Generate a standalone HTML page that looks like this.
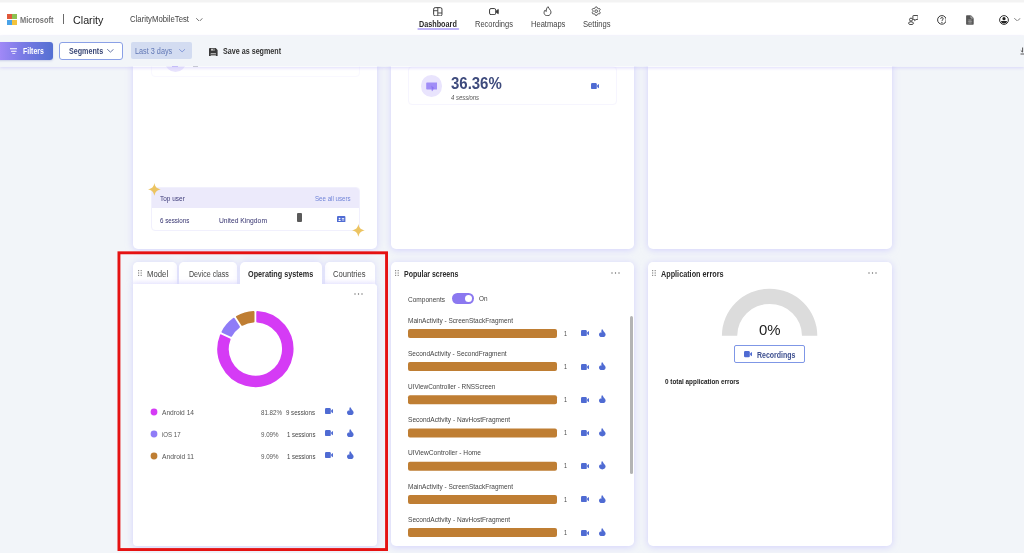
<!DOCTYPE html>
<html lang="en"><head><meta charset="utf-8"><title>Clarity - Dashboard</title>
<style>
html,body{margin:0;padding:0}
body{width:1024px;height:553px;overflow:hidden;position:relative;background:#f2f5f9;font-family:"Liberation Sans", sans-serif}
.t{position:absolute;white-space:pre;transform-origin:0 50%;}
#root{filter:blur(0.55px);position:absolute;left:0;top:0;width:1024px;height:553px;overflow:hidden}
</style></head><body><div id="root">
<div style="position:absolute;left:133.30px;top:40.00px;width:243.90px;height:208.70px;background:#fff;border-radius:5px;box-shadow:0 1px 7px 0 rgba(190,185,255,0.6);"></div>
<div style="position:absolute;left:391.00px;top:40.00px;width:243.30px;height:208.70px;background:#fff;border-radius:5px;box-shadow:0 1px 7px 0 rgba(190,185,255,0.6);"></div>
<div style="position:absolute;left:648.00px;top:40.00px;width:244.00px;height:208.70px;background:#fff;border-radius:5px;box-shadow:0 1px 7px 0 rgba(190,185,255,0.6);"></div>
<div style="position:absolute;left:133.30px;top:262.00px;width:43.70px;height:24.00px;background:linear-gradient(180deg,#fff 0,#fff 72%,#f4f3fe 100%);border-radius:5px 5px 0 0;box-shadow:0 0 6px 0 rgba(190,185,255,0.48);"></div>
<div style="position:absolute;left:179.20px;top:262.00px;width:58.20px;height:24.00px;background:linear-gradient(180deg,#fff 0,#fff 72%,#f4f3fe 100%);border-radius:5px 5px 0 0;box-shadow:0 0 6px 0 rgba(190,185,255,0.48);"></div>
<div style="position:absolute;left:324.60px;top:262.00px;width:50.40px;height:24.00px;background:linear-gradient(180deg,#fff 0,#fff 72%,#f4f3fe 100%);border-radius:5px 5px 0 0;box-shadow:0 0 6px 0 rgba(190,185,255,0.48);"></div>
<div style="position:absolute;left:133.30px;top:283.80px;width:243.90px;height:262.40px;background:#fff;border-radius:5px;box-shadow:0 1px 7px 0 rgba(190,185,255,0.6);border-radius:0 4px 4px 4px;"></div>
<div style="position:absolute;left:239.60px;top:262.00px;width:82.40px;height:24.00px;background:#fff;border-radius:5px 5px 0 0;box-shadow:0 -1px 6px 0 rgba(190,185,255,0.48);"></div>
<div style="position:absolute;left:133.30px;top:283.80px;width:243.90px;height:20.00px;background:#fff;border-radius:0 4px 0 0;"></div>
<div style="position:absolute;left:391.00px;top:262.00px;width:243.30px;height:284.00px;background:#fff;border-radius:5px;box-shadow:0 1px 7px 0 rgba(190,185,255,0.6);"></div>
<div style="position:absolute;left:648.00px;top:262.00px;width:244.00px;height:284.00px;background:#fff;border-radius:5px;box-shadow:0 1px 7px 0 rgba(190,185,255,0.6);"></div>
<div style="position:absolute;left:151.00px;top:40.00px;width:208.60px;height:37.00px;border:1px solid #f9f8ff;border-radius:4px;box-sizing:border-box;"></div>
<div style="position:absolute;left:164.8px;top:51px;width:21.2px;height:21.2px;border-radius:50%;background:#e9e4fd"></div><div style="position:absolute;left:172.4px;top:65.6px;width:6px;height:1.4px;background:#a08df7"></div>
<div style="position:absolute;left:193.00px;top:66.00px;width:4.60px;height:1.00px;background:#a4a4b4;"></div>
<div style="position:absolute;left:408.40px;top:66.40px;width:208.40px;height:38.60px;border:1px solid #f6f5fe;border-radius:4px;box-sizing:border-box;"></div>
<div style="position:absolute;left:420.6px;top:75.4px;width:21.2px;height:21.2px;border-radius:50%;background:#e9e4fd"></div>
<svg style="position:absolute;left:425.6px;top:81.6px" width="11.4" height="10" viewBox="0 0 11.4 10"><path d="M1 .4h9.4a.8.8 0 0 1 .8.8v5.6a.8.8 0 0 1-.8.8H7.6L6 9.6 5.4 7.6H1a.8.8 0 0 1-.8-.8V1.200A.8.800 0 0 1 1 .4z" fill="#a08df7"/><path d="M5.300 3.400l3.400 3-1.700.1-.9 1.500z" fill="#8a74f0"/></svg>
<svg style="position:absolute;left:591.00px;top:82.80px" width="8.40" height="6.20" viewBox="0 0 84 62"><rect x="0" y="0" width="58" height="62" rx="12" fill="#4f6bd3"/><path d="M62 22L80 9a3 3 0 0 1 4 3v38a3 3 0 0 1-4 3L62 40z" fill="#4f6bd3"/></svg>
<div style="position:absolute;left:151.20px;top:187.10px;width:208.40px;height:44.00px;border:1px solid #f1f0fd;border-radius:4px;box-sizing:border-box;background:#fff;overflow:hidden;"><div style="height:20.4px;background:#eceafb"></div></div>
<svg style="position:absolute;left:148.10px;top:183.20px" width="12.80" height="12.80" viewBox="-10 -10 20 20"><path d="M0-10C1.400-3.500 3.500-1.400 10 0 3.500 1.400 1.400 3.500 0 10-1.400 3.500-3.500 1.400-10 0-3.500-1.400-1.400-3.500 0-10z" fill="#ecc462"/></svg>
<svg style="position:absolute;left:352.10px;top:223.90px" width="12.80" height="12.80" viewBox="-10 -10 20 20"><path d="M0-10C1.400-3.500 3.500-1.400 10 0 3.500 1.400 1.400 3.500 0 10-1.400 3.500-3.500 1.400-10 0-3.500-1.400-1.400-3.500 0-10z" fill="#ecc462"/></svg>
<div style="position:absolute;left:297.00px;top:213.00px;width:5.20px;height:9.40px;background:#5a5a5a;border-radius:1px;"></div>
<svg style="position:absolute;left:337.4px;top:216px" width="8.4" height="6.4" viewBox="0 0 84 64"><rect width="84" height="64" rx="10" fill="#4f6bd3"/><circle cx="26" cy="26" r="9" fill="#fff"/><rect x="14" y="40" width="24" height="10" rx="4" fill="#fff"/><rect x="48" y="20" width="24" height="8" fill="#fff"/><rect x="48" y="36" width="24" height="8" fill="#fff"/></svg>
<svg style="position:absolute;left:138.20px;top:270.30px" width="4" height="6.2" viewBox="0 0 4 6.2"><rect x="0" y="0" width="1.200" height="1.200" fill="#8a8a8a"/><rect x="2.6" y="0" width="1.200" height="1.200" fill="#8a8a8a"/><rect x="0" y="2.4" width="1.200" height="1.200" fill="#8a8a8a"/><rect x="2.6" y="2.4" width="1.200" height="1.200" fill="#8a8a8a"/><rect x="0" y="4.8" width="1.200" height="1.200" fill="#8a8a8a"/><rect x="2.6" y="4.8" width="1.200" height="1.200" fill="#8a8a8a"/></svg>
<svg style="position:absolute;left:395.20px;top:270.40px" width="4" height="6.2" viewBox="0 0 4 6.2"><rect x="0" y="0" width="1.200" height="1.200" fill="#8a8a8a"/><rect x="2.6" y="0" width="1.200" height="1.200" fill="#8a8a8a"/><rect x="0" y="2.4" width="1.200" height="1.200" fill="#8a8a8a"/><rect x="2.6" y="2.4" width="1.200" height="1.200" fill="#8a8a8a"/><rect x="0" y="4.8" width="1.200" height="1.200" fill="#8a8a8a"/><rect x="2.6" y="4.8" width="1.200" height="1.200" fill="#8a8a8a"/></svg>
<svg style="position:absolute;left:652.40px;top:270.40px" width="4" height="6.2" viewBox="0 0 4 6.2"><rect x="0" y="0" width="1.200" height="1.200" fill="#8a8a8a"/><rect x="2.6" y="0" width="1.200" height="1.200" fill="#8a8a8a"/><rect x="0" y="2.4" width="1.200" height="1.200" fill="#8a8a8a"/><rect x="2.6" y="2.4" width="1.200" height="1.200" fill="#8a8a8a"/><rect x="0" y="4.8" width="1.200" height="1.200" fill="#8a8a8a"/><rect x="2.6" y="4.8" width="1.200" height="1.200" fill="#8a8a8a"/></svg>
<svg style="position:absolute;left:353.60px;top:293.40px" width="9" height="2" viewBox="0 0 9 2"><circle cx="1" cy="1" r=".7" fill="#666"/><circle cx="4.500" cy="1" r=".7" fill="#666"/><circle cx="8" cy="1" r=".7" fill="#666"/></svg>
<svg style="position:absolute;left:610.80px;top:271.80px" width="9" height="2" viewBox="0 0 9 2"><circle cx="1" cy="1" r=".7" fill="#666"/><circle cx="4.500" cy="1" r=".7" fill="#666"/><circle cx="8" cy="1" r=".7" fill="#666"/></svg>
<svg style="position:absolute;left:868.00px;top:271.80px" width="9" height="2" viewBox="0 0 9 2"><circle cx="1" cy="1" r=".7" fill="#666"/><circle cx="4.500" cy="1" r=".7" fill="#666"/><circle cx="8" cy="1" r=".7" fill="#666"/></svg>
<svg style="position:absolute;left:205px;top:300px" width="100" height="100" viewBox="205 300 100 100"><path d="M257.30 311.95A37.10 37.10 0 1 1 220.91 335.33L229.57 339.29A27.60 27.60 0 1 0 257.30 321.47Z" fill="#d53bf5" stroke="#d53bf5" stroke-width="2" stroke-linejoin="round"/><path d="M222.49 331.88A37.10 37.10 0 0 1 233.77 318.86L238.92 326.86A27.60 27.60 0 0 0 231.14 335.83Z" fill="#8f7cf7" stroke="#8f7cf7" stroke-width="2" stroke-linejoin="round"/><path d="M236.96 316.80A37.10 37.10 0 0 1 253.50 311.95L253.50 321.47A27.60 27.60 0 0 0 242.11 324.81Z" fill="#bf7e33" stroke="#bf7e33" stroke-width="2" stroke-linejoin="round"/></svg>
<svg style="position:absolute;left:149px;top:407.00px" width="10" height="10" viewBox="-5 -5 10 10"><circle r="3.400" fill="#d53bf5"/></svg>
<svg style="position:absolute;left:325.00px;top:408.20px" width="8.40" height="6.20" viewBox="0 0 84 62"><rect x="0" y="0" width="58" height="62" rx="12" fill="#4f6bd3"/><path d="M62 22L80 9a3 3 0 0 1 4 3v38a3 3 0 0 1-4 3L62 40z" fill="#4f6bd3"/></svg>
<svg style="position:absolute;left:347.40px;top:406.70px" width="6.60" height="8.40" viewBox="0 0 66 84"><path d="M30 0C42 8 44 20 50 28 60 38 66 46 66 56 66 72 52 84 33 84 14 84 0 72 0 56 0 46 6 38 14 32 16 38 20 40 24 38 22 24 24 10 30 0z" fill="#4f6bd3"/></svg>
<svg style="position:absolute;left:149px;top:429.00px" width="10" height="10" viewBox="-5 -5 10 10"><circle r="3.400" fill="#8f7cf7"/></svg>
<svg style="position:absolute;left:325.00px;top:430.20px" width="8.40" height="6.20" viewBox="0 0 84 62"><rect x="0" y="0" width="58" height="62" rx="12" fill="#4f6bd3"/><path d="M62 22L80 9a3 3 0 0 1 4 3v38a3 3 0 0 1-4 3L62 40z" fill="#4f6bd3"/></svg>
<svg style="position:absolute;left:347.40px;top:428.70px" width="6.60" height="8.40" viewBox="0 0 66 84"><path d="M30 0C42 8 44 20 50 28 60 38 66 46 66 56 66 72 52 84 33 84 14 84 0 72 0 56 0 46 6 38 14 32 16 38 20 40 24 38 22 24 24 10 30 0z" fill="#4f6bd3"/></svg>
<svg style="position:absolute;left:149px;top:451.00px" width="10" height="10" viewBox="-5 -5 10 10"><circle r="3.400" fill="#bf7e33"/></svg>
<svg style="position:absolute;left:325.00px;top:452.20px" width="8.40" height="6.20" viewBox="0 0 84 62"><rect x="0" y="0" width="58" height="62" rx="12" fill="#4f6bd3"/><path d="M62 22L80 9a3 3 0 0 1 4 3v38a3 3 0 0 1-4 3L62 40z" fill="#4f6bd3"/></svg>
<svg style="position:absolute;left:347.40px;top:450.70px" width="6.60" height="8.40" viewBox="0 0 66 84"><path d="M30 0C42 8 44 20 50 28 60 38 66 46 66 56 66 72 52 84 33 84 14 84 0 72 0 56 0 46 6 38 14 32 16 38 20 40 24 38 22 24 24 10 30 0z" fill="#4f6bd3"/></svg>
<div style="position:absolute;left:451.90px;top:293.30px;width:22.30px;height:10.80px;background:#8b78f0;border-radius:5.4px;"></div>
<div style="position:absolute;left:465.2px;top:295.1px;width:7.2px;height:7.2px;border-radius:50%;background:#fff"></div>
<svg style="position:absolute;left:581.00px;top:330.30px" width="8.40" height="6.20" viewBox="0 0 84 62"><rect x="0" y="0" width="58" height="62" rx="12" fill="#4f6bd3"/><path d="M62 22L80 9a3 3 0 0 1 4 3v38a3 3 0 0 1-4 3L62 40z" fill="#4f6bd3"/></svg>
<svg style="position:absolute;left:599.20px;top:328.60px" width="6.60" height="8.40" viewBox="0 0 66 84"><path d="M30 0C42 8 44 20 50 28 60 38 66 46 66 56 66 72 52 84 33 84 14 84 0 72 0 56 0 46 6 38 14 32 16 38 20 40 24 38 22 24 24 10 30 0z" fill="#4f6bd3"/></svg>
<svg style="position:absolute;left:581.00px;top:363.50px" width="8.40" height="6.20" viewBox="0 0 84 62"><rect x="0" y="0" width="58" height="62" rx="12" fill="#4f6bd3"/><path d="M62 22L80 9a3 3 0 0 1 4 3v38a3 3 0 0 1-4 3L62 40z" fill="#4f6bd3"/></svg>
<svg style="position:absolute;left:599.20px;top:361.80px" width="6.60" height="8.40" viewBox="0 0 66 84"><path d="M30 0C42 8 44 20 50 28 60 38 66 46 66 56 66 72 52 84 33 84 14 84 0 72 0 56 0 46 6 38 14 32 16 38 20 40 24 38 22 24 24 10 30 0z" fill="#4f6bd3"/></svg>
<svg style="position:absolute;left:581.00px;top:396.70px" width="8.40" height="6.20" viewBox="0 0 84 62"><rect x="0" y="0" width="58" height="62" rx="12" fill="#4f6bd3"/><path d="M62 22L80 9a3 3 0 0 1 4 3v38a3 3 0 0 1-4 3L62 40z" fill="#4f6bd3"/></svg>
<svg style="position:absolute;left:599.20px;top:395.00px" width="6.60" height="8.40" viewBox="0 0 66 84"><path d="M30 0C42 8 44 20 50 28 60 38 66 46 66 56 66 72 52 84 33 84 14 84 0 72 0 56 0 46 6 38 14 32 16 38 20 40 24 38 22 24 24 10 30 0z" fill="#4f6bd3"/></svg>
<svg style="position:absolute;left:581.00px;top:429.90px" width="8.40" height="6.20" viewBox="0 0 84 62"><rect x="0" y="0" width="58" height="62" rx="12" fill="#4f6bd3"/><path d="M62 22L80 9a3 3 0 0 1 4 3v38a3 3 0 0 1-4 3L62 40z" fill="#4f6bd3"/></svg>
<svg style="position:absolute;left:599.20px;top:428.20px" width="6.60" height="8.40" viewBox="0 0 66 84"><path d="M30 0C42 8 44 20 50 28 60 38 66 46 66 56 66 72 52 84 33 84 14 84 0 72 0 56 0 46 6 38 14 32 16 38 20 40 24 38 22 24 24 10 30 0z" fill="#4f6bd3"/></svg>
<svg style="position:absolute;left:581.00px;top:463.10px" width="8.40" height="6.20" viewBox="0 0 84 62"><rect x="0" y="0" width="58" height="62" rx="12" fill="#4f6bd3"/><path d="M62 22L80 9a3 3 0 0 1 4 3v38a3 3 0 0 1-4 3L62 40z" fill="#4f6bd3"/></svg>
<svg style="position:absolute;left:599.20px;top:461.40px" width="6.60" height="8.40" viewBox="0 0 66 84"><path d="M30 0C42 8 44 20 50 28 60 38 66 46 66 56 66 72 52 84 33 84 14 84 0 72 0 56 0 46 6 38 14 32 16 38 20 40 24 38 22 24 24 10 30 0z" fill="#4f6bd3"/></svg>
<svg style="position:absolute;left:581.00px;top:496.30px" width="8.40" height="6.20" viewBox="0 0 84 62"><rect x="0" y="0" width="58" height="62" rx="12" fill="#4f6bd3"/><path d="M62 22L80 9a3 3 0 0 1 4 3v38a3 3 0 0 1-4 3L62 40z" fill="#4f6bd3"/></svg>
<svg style="position:absolute;left:599.20px;top:494.60px" width="6.60" height="8.40" viewBox="0 0 66 84"><path d="M30 0C42 8 44 20 50 28 60 38 66 46 66 56 66 72 52 84 33 84 14 84 0 72 0 56 0 46 6 38 14 32 16 38 20 40 24 38 22 24 24 10 30 0z" fill="#4f6bd3"/></svg>
<svg style="position:absolute;left:581.00px;top:529.50px" width="8.40" height="6.20" viewBox="0 0 84 62"><rect x="0" y="0" width="58" height="62" rx="12" fill="#4f6bd3"/><path d="M62 22L80 9a3 3 0 0 1 4 3v38a3 3 0 0 1-4 3L62 40z" fill="#4f6bd3"/></svg>
<svg style="position:absolute;left:599.20px;top:527.80px" width="6.60" height="8.40" viewBox="0 0 66 84"><path d="M30 0C42 8 44 20 50 28 60 38 66 46 66 56 66 72 52 84 33 84 14 84 0 72 0 56 0 46 6 38 14 32 16 38 20 40 24 38 22 24 24 10 30 0z" fill="#4f6bd3"/></svg>
<svg style="position:absolute;left:0;top:0" width="1024" height="553" viewBox="0 0 1024 553"><rect x="408" y="328.90" width="149" height="9" rx="2" fill="#bf7e33"/><rect x="408" y="362.10" width="149" height="9" rx="2" fill="#bf7e33"/><rect x="408" y="395.30" width="149" height="9" rx="2" fill="#bf7e33"/><rect x="408" y="428.50" width="149" height="9" rx="2" fill="#bf7e33"/><rect x="408" y="461.70" width="149" height="9" rx="2" fill="#bf7e33"/><rect x="408" y="494.90" width="149" height="9" rx="2" fill="#bf7e33"/><rect x="408" y="528.10" width="149" height="9" rx="2" fill="#bf7e33"/></svg>
<div style="position:absolute;left:630.00px;top:315.80px;width:3.20px;height:158.00px;background:#b4b4b4;border-radius:1.600px;"></div>
<svg style="position:absolute;left:715px;top:285px" width="110" height="55" viewBox="715 285 110 55"><path d="M721.9 335.7A47.7 47.1 0 0 1 817.3 335.7L802 335.7A32.4 31.8 0 0 0 737.2 335.7Z" fill="#dcdcdc"/></svg>
<div style="position:absolute;left:734.30px;top:345.40px;width:70.60px;height:17.80px;background:#fff;border:1px solid #7f97e6;border-radius:2px;box-sizing:border-box;"></div>
<svg style="position:absolute;left:744.00px;top:351.40px" width="8.40" height="6.20" viewBox="0 0 84 62"><rect x="0" y="0" width="58" height="62" rx="12" fill="#4f6bd3"/><path d="M62 22L80 9a3 3 0 0 1 4 3v38a3 3 0 0 1-4 3L62 40z" fill="#4f6bd3"/></svg>
<span class="t" style="left:451.00px;top:72.15px;font-size:16.50px;line-height:23.10px;font-weight:700;color:#3d4a7c;transform:scaleX(0.9059);">36.36%</span>
<span class="t" style="left:451.00px;top:92.68px;font-size:6.60px;line-height:9.24px;font-weight:400;color:#555;transform:scaleX(0.8987);font-style:italic;">4 sessions</span>
<span class="t" style="left:160.30px;top:193.78px;font-size:7.60px;line-height:10.64px;font-weight:400;color:#3c3a78;transform:scaleX(0.8515);">Top user</span>
<span class="t" style="left:314.60px;top:193.78px;font-size:7.60px;line-height:10.64px;font-weight:400;color:#6f83d8;transform:scaleX(0.8108);">See all users</span>
<span class="t" style="left:160.00px;top:215.62px;font-size:7.40px;line-height:10.36px;font-weight:400;color:#34326f;transform:scaleX(0.8419);">6 sessions</span>
<span class="t" style="left:219.00px;top:215.62px;font-size:7.40px;line-height:10.36px;font-weight:400;color:#34326f;transform:scaleX(0.9127);">United Kingdom</span>
<span class="t" style="left:146.90px;top:268.82px;font-size:8.40px;line-height:11.76px;font-weight:400;color:#444;transform:scaleX(0.9249);">Model</span>
<span class="t" style="left:188.60px;top:268.82px;font-size:8.40px;line-height:11.76px;font-weight:400;color:#444;transform:scaleX(0.8465);">Device class</span>
<span class="t" style="left:248.40px;top:268.82px;font-size:8.40px;line-height:11.76px;font-weight:700;color:#2b2b2b;transform:scaleX(0.8646);">Operating systems</span>
<span class="t" style="left:333.40px;top:268.82px;font-size:8.40px;line-height:11.76px;font-weight:400;color:#444;transform:scaleX(0.9095);">Countries</span>
<span class="t" style="left:162.00px;top:407.62px;font-size:7.40px;line-height:10.36px;font-weight:400;color:#555;transform:scaleX(0.8951);">Android 14</span>
<span class="t" style="left:260.60px;top:407.62px;font-size:7.40px;line-height:10.36px;font-weight:400;color:#555;transform:scaleX(0.8374);">81.82%</span>
<span class="t" style="left:286.40px;top:407.62px;font-size:7.40px;line-height:10.36px;font-weight:400;color:#444;transform:scaleX(0.8304);">9 sessions</span>
<span class="t" style="left:162.00px;top:429.62px;font-size:7.40px;line-height:10.36px;font-weight:400;color:#555;transform:scaleX(0.8227);">iOS 17</span>
<span class="t" style="left:260.60px;top:429.62px;font-size:7.40px;line-height:10.36px;font-weight:400;color:#555;transform:scaleX(0.8393);">9.09%</span>
<span class="t" style="left:287.00px;top:429.62px;font-size:7.40px;line-height:10.36px;font-weight:400;color:#444;transform:scaleX(0.8132);">1 sessions</span>
<span class="t" style="left:162.00px;top:451.62px;font-size:7.40px;line-height:10.36px;font-weight:400;color:#555;transform:scaleX(0.9090);">Android 11</span>
<span class="t" style="left:260.60px;top:451.62px;font-size:7.40px;line-height:10.36px;font-weight:400;color:#555;transform:scaleX(0.8393);">9.09%</span>
<span class="t" style="left:287.00px;top:451.62px;font-size:7.40px;line-height:10.36px;font-weight:400;color:#444;transform:scaleX(0.8132);">1 sessions</span>
<span class="t" style="left:403.70px;top:268.79px;font-size:8.30px;line-height:11.62px;font-weight:700;color:#2b2b2b;transform:scaleX(0.8410);">Popular screens</span>
<span class="t" style="left:408.00px;top:294.68px;font-size:7.60px;line-height:10.64px;font-weight:400;color:#444;transform:scaleX(0.8592);">Components</span>
<span class="t" style="left:478.50px;top:293.98px;font-size:7.60px;line-height:10.64px;font-weight:400;color:#444;transform:scaleX(0.8382);">On</span>
<span class="t" style="left:408.00px;top:315.62px;font-size:7.40px;line-height:10.36px;font-weight:400;color:#444;transform:scaleX(0.8784);">MainActivity - ScreenStackFragment</span>
<span class="t" style="left:563.60px;top:328.52px;font-size:7.40px;line-height:10.36px;font-weight:400;color:#444;transform:scaleX(0.7273);">1</span>
<span class="t" style="left:408.00px;top:348.82px;font-size:7.40px;line-height:10.36px;font-weight:400;color:#444;transform:scaleX(0.8825);">SecondActivity - SecondFragment</span>
<span class="t" style="left:563.60px;top:361.72px;font-size:7.40px;line-height:10.36px;font-weight:400;color:#444;transform:scaleX(0.7273);">1</span>
<span class="t" style="left:408.00px;top:382.02px;font-size:7.40px;line-height:10.36px;font-weight:400;color:#444;transform:scaleX(0.8662);">UIViewController - RNSScreen</span>
<span class="t" style="left:563.60px;top:394.92px;font-size:7.40px;line-height:10.36px;font-weight:400;color:#444;transform:scaleX(0.7273);">1</span>
<span class="t" style="left:408.00px;top:415.22px;font-size:7.40px;line-height:10.36px;font-weight:400;color:#444;transform:scaleX(0.8886);">SecondActivity - NavHostFragment</span>
<span class="t" style="left:563.60px;top:428.12px;font-size:7.40px;line-height:10.36px;font-weight:400;color:#444;transform:scaleX(0.7273);">1</span>
<span class="t" style="left:408.00px;top:448.42px;font-size:7.40px;line-height:10.36px;font-weight:400;color:#444;transform:scaleX(0.8945);">UIViewController - Home</span>
<span class="t" style="left:563.60px;top:461.32px;font-size:7.40px;line-height:10.36px;font-weight:400;color:#444;transform:scaleX(0.7273);">1</span>
<span class="t" style="left:408.00px;top:481.62px;font-size:7.40px;line-height:10.36px;font-weight:400;color:#444;transform:scaleX(0.8784);">MainActivity - ScreenStackFragment</span>
<span class="t" style="left:563.60px;top:494.52px;font-size:7.40px;line-height:10.36px;font-weight:400;color:#444;transform:scaleX(0.7273);">1</span>
<span class="t" style="left:408.00px;top:514.82px;font-size:7.40px;line-height:10.36px;font-weight:400;color:#444;transform:scaleX(0.8886);">SecondActivity - NavHostFragment</span>
<span class="t" style="left:563.60px;top:527.72px;font-size:7.40px;line-height:10.36px;font-weight:400;color:#444;transform:scaleX(0.7273);">1</span>
<span class="t" style="left:661.00px;top:268.79px;font-size:8.30px;line-height:11.62px;font-weight:700;color:#2b2b2b;transform:scaleX(0.8745);">Application errors</span>
<span class="t" style="left:758.60px;top:319.32px;font-size:15.40px;line-height:21.56px;font-weight:400;color:#1f1f1f;transform:scaleX(0.9708);">0%</span>
<span class="t" style="left:756.80px;top:349.56px;font-size:8.20px;line-height:11.48px;font-weight:700;color:#3d4f8f;transform:scaleX(0.8524);">Recordings</span>
<span class="t" style="left:665.00px;top:377.06px;font-size:7.20px;line-height:10.08px;font-weight:700;color:#222;transform:scaleX(0.8870);">0 total application errors</span>
<svg style="position:absolute;left:0;top:0" width="1024" height="553" viewBox="0 0 1024 553"><rect x="118.95" y="252.8" width="267.6" height="296.75" fill="none" stroke="#e51212" stroke-width="2.9"/></svg>
<div style="position:absolute;left:0.00px;top:0.00px;width:1024.00px;height:3.00px;background:linear-gradient(180deg,#f3f3f3 0,#f3f3f3 2px,#f9f9f9 2px,#f9f9f9 3px);"></div>
<div style="position:absolute;left:0.00px;top:3.00px;width:1024.00px;height:33.00px;background:linear-gradient(180deg,#fff 0,#fff 32px,#f9fafc 32px,#f9fafc 33px);"></div>
<div style="position:absolute;left:0.00px;top:36.00px;width:1024.00px;height:31.00px;background:linear-gradient(180deg,#f2f5f9 0,#f2f5f9 30px,rgba(242,245,249,0.45) 30px,rgba(242,245,249,0.45) 31px);box-shadow:0 1px 3px rgba(196,190,250,0.55);"></div>
<div style="position:absolute;left:7.00px;top:14.40px;width:4.80px;height:4.80px;background:#e0583a;"></div>
<div style="position:absolute;left:12.40px;top:14.40px;width:4.80px;height:4.80px;background:#8cc152;"></div>
<div style="position:absolute;left:7.00px;top:19.80px;width:4.80px;height:4.80px;background:#4aa3e8;"></div>
<div style="position:absolute;left:12.40px;top:19.80px;width:4.80px;height:4.80px;background:#f3c33c;"></div>
<div style="position:absolute;left:63.00px;top:14.00px;width:1.00px;height:10.00px;background:#6a6a6a;"></div>
<svg style="position:absolute;left:196.20px;top:17.60px" width="6.80" height="3.80" viewBox="0 0 6.80 3.80"><path d="M.5 .5L3.40 3.30L6.30 .5" fill="none" stroke="#666" stroke-width="0.9" stroke-linecap="round" stroke-linejoin="round"/></svg>
<svg style="position:absolute;left:433px;top:6.6px" width="9.6" height="9.6" viewBox="0 0 9.6 9.6"><rect x=".65" y=".65" width="8.300" height="8.300" rx="1.500" fill="none" stroke="#3a3a3a" stroke-width="1"/><path d="M4.800.7v8.200M.7 3.700h4.100M4.800 6h4.100" stroke="#3a3a3a" stroke-width=".9" fill="none"/></svg>
<svg style="position:absolute;left:488.8px;top:8px" width="10.4" height="7.2" viewBox="0 0 10.4 7.2"><rect x=".55" y=".55" width="6.200" height="6.100" rx="1.500" fill="none" stroke="#3a3a3a" stroke-width="1"/><path d="M7.200 2.900L9.300 1.500v4.200L7.200 4.300z" fill="#3a3a3a" stroke="#3a3a3a" stroke-width=".8" stroke-linejoin="round"/></svg>
<svg style="position:absolute;left:543.4px;top:5.8px" width="9" height="10.4" viewBox="0 0 10 12"><path d="M5.600.8C6.300 2.600 7.700 3.600 8.500 5.200 9.500 7.200 9 9.400 7.100 10.600 5.300 11.700 2.900 11.400 1.700 9.800.6 8.300.9 6.300 2.100 4.900 2.400 5.700 2.900 6.200 3.600 6.300 3.400 4.300 3.900 2.200 5.600.8z" fill="none" stroke="#3a3a3a" stroke-width="1.050" stroke-linejoin="round"/></svg>
<svg style="position:absolute;left:591.4px;top:5.8px" width="10.4" height="10.4" viewBox="-5.200 -5.200 10.4 10.4"><path d="M3.72 2.15L3.56 2.40L3.39 2.65L2.99 2.69L2.54 2.63L2.13 2.54L1.88 2.59L1.70 2.71L1.50 2.83L1.30 2.92L1.13 3.11L1.01 3.52L0.84 3.93L0.60 4.26L0.30 4.29L0.00 4.30L-0.30 4.29L-0.60 4.26L-0.84 3.93L-1.01 3.52L-1.13 3.11L-1.30 2.92L-1.50 2.83L-1.70 2.71L-1.88 2.59L-2.13 2.54L-2.54 2.63L-2.99 2.69L-3.39 2.65L-3.56 2.40L-3.72 2.15L-3.86 1.88L-3.99 1.61L-3.83 1.24L-3.55 0.88L-3.26 0.57L-3.18 0.33L-3.20 0.11L-3.20 -0.11L-3.18 -0.33L-3.26 -0.57L-3.55 -0.88L-3.83 -1.24L-3.99 -1.61L-3.86 -1.88L-3.72 -2.15L-3.56 -2.40L-3.39 -2.65L-2.99 -2.69L-2.54 -2.63L-2.13 -2.54L-1.88 -2.59L-1.70 -2.71L-1.50 -2.83L-1.30 -2.92L-1.13 -3.11L-1.01 -3.52L-0.84 -3.93L-0.60 -4.26L-0.30 -4.29L-0.00 -4.30L0.30 -4.29L0.60 -4.26L0.84 -3.93L1.01 -3.52L1.13 -3.11L1.30 -2.92L1.50 -2.83L1.70 -2.71L1.88 -2.59L2.13 -2.54L2.54 -2.63L2.99 -2.69L3.39 -2.65L3.56 -2.40L3.72 -2.15L3.86 -1.88L3.99 -1.61L3.83 -1.24L3.55 -0.88L3.26 -0.57L3.18 -0.33L3.20 -0.11L3.20 0.11L3.18 0.33L3.26 0.57L3.55 0.88L3.83 1.24L3.99 1.61L3.86 1.88Z" fill="none" stroke="#3a3a3a" stroke-width=".95" stroke-linejoin="round"/><circle r="1.350" fill="none" stroke="#3a3a3a" stroke-width=".85"/></svg>
<svg style="position:absolute;left:416px;top:27px" width="46" height="4" viewBox="416 27 46 4"><rect x="417.4" y="28.200" width="41.8" height="1.500" rx=".7" fill="#ab9cf7"/></svg>
<svg style="position:absolute;left:907.6px;top:14.6px" width="10.6" height="10.2" viewBox="0 0 10.6 10.2"><circle cx="3" cy="4.600" r="1.500" fill="none" stroke="#333" stroke-width=".9"/><ellipse cx="3" cy="8.200" rx="2.500" ry="1.400" fill="none" stroke="#333" stroke-width=".9"/><path d="M5.400.5h4.200a.5.500 0 0 1 .5.500v3a.5.500 0 0 1-.5.500H8L6.600 5.700V4.500H5.400a.5.500 0 0 1-.5-.5V1a.5.500 0 0 1 .5-.5z" fill="none" stroke="#333" stroke-width=".9" stroke-linejoin="round"/></svg>
<svg style="position:absolute;left:936.6px;top:15.2px" width="9.8" height="9.8" viewBox="-4.900 -4.900 9.800 9.800"><circle r="4.300" fill="none" stroke="#333" stroke-width="1"/><path d="M-1.300-1.100C-1.300-2.800 1.300-2.800 1.300-1.100 1.300-.1 0 0 0 1.100" fill="none" stroke="#333" stroke-width=".9"/><circle cy="2.500" r=".6" fill="#333"/></svg>
<svg style="position:absolute;left:966px;top:14.8px" width="8" height="10" viewBox="0 0 8 10"><path d="M.8.3H5L7.700 3v6a.7.700 0 0 1-.7.700H.8A.7.700 0 0 1 .1 9V1A.7.700 0 0 1 .8.3z" fill="#555"/><path d="M5 .3V3h2.700" fill="none" stroke="#fff" stroke-width=".5"/><path d="M1.800 5h4.400M1.800 6.500h4.400M1.800 8h4.400M4 4.400v4.200" stroke="#aaa" stroke-width=".6"/></svg>
<svg style="position:absolute;left:999.2px;top:15px" width="10" height="10" viewBox="-5 -5 10 10"><circle r="4.400" fill="none" stroke="#333" stroke-width="1"/><circle cy="-1.300" r="1.600" fill="#222"/><path d="M-2.900 1h5.800v.6c0 1.200-1.300 2-2.900 2s-2.900-.8-2.900-2z" fill="#222"/></svg>
<svg style="position:absolute;left:1014.20px;top:17.80px" width="6.60" height="3.40" viewBox="0 0 6.60 3.40"><path d="M.5 .5L3.30 2.90L6.10 .5" fill="none" stroke="#777" stroke-width="0.9" stroke-linecap="round" stroke-linejoin="round"/></svg>
<div style="position:absolute;left:-4.00px;top:42.00px;width:57.20px;height:17.80px;background:linear-gradient(90deg,#a78bfa 0%,#7b7be6 45%,#5470d2 100%);border-radius:3px;box-shadow:0 1px 2px rgba(80,90,180,.25);"></div>
<svg style="position:absolute;left:9.6px;top:47.8px" width="7.6" height="6.4" viewBox="0 0 7.6 6.4"><path d="M.3.700h7M1.500 3.200h4.600M2.700 5.700h2.200" stroke="#fff" stroke-width="1.100" stroke-linecap="round"/></svg>
<div style="position:absolute;left:59.00px;top:42.00px;width:64.40px;height:17.80px;background:#fff;border:1px solid #8aa0e6;border-radius:3px;box-sizing:border-box;"></div>
<svg style="position:absolute;left:107.40px;top:49.40px" width="6.80" height="3.60" viewBox="0 0 6.80 3.60"><path d="M.5 .5L3.40 3.10L6.30 .5" fill="none" stroke="#5b6b9c" stroke-width="0.9" stroke-linecap="round" stroke-linejoin="round"/></svg>
<div style="position:absolute;left:130.60px;top:42.40px;width:61.00px;height:16.80px;background:#d3dcf1;border-radius:2px;"></div>
<svg style="position:absolute;left:179.20px;top:49.40px" width="6.20" height="3.40" viewBox="0 0 6.20 3.40"><path d="M.5 .5L3.10 2.90L5.70 .5" fill="none" stroke="#7d93d6" stroke-width="0.9" stroke-linecap="round" stroke-linejoin="round"/></svg>
<svg style="position:absolute;left:209px;top:47.6px" width="8.6" height="8.6" viewBox="0 0 8.6 8.6"><path d="M.9 0h5.800L8.600 1.900V7.700a.9.900 0 0 1-.9.900H.9A.9.900 0 0 1 0 7.700V.9A.9.900 0 0 1 .9 0z" fill="#3a3a3a"/><rect x="2" y=".7" width="3.800" height="1.900" fill="#c8c8c8"/><rect x="4.400" y=".9" width="1" height="1.500" fill="#3a3a3a"/><rect x="1.700" y="5" width="5.200" height="2.900" fill="#bdbdbd"/><rect x="1.700" y="5.900" width="5.200" height=".8" fill="#3a3a3a"/></svg>
<svg style="position:absolute;left:1020.4px;top:47px" width="4" height="8" viewBox="0 0 4 8"><path d="M2.600.5v4.500M.8 3.500l1.800 1.700M.5 7h3.500" stroke="#444" stroke-width=".9" fill="none"/></svg>
<span class="t" style="left:20.00px;top:13.86px;font-size:9.20px;line-height:12.88px;font-weight:700;color:#767676;transform:scaleX(0.8103);">Microsoft</span>
<span class="t" style="left:73.40px;top:11.98px;font-size:11.60px;line-height:16.24px;font-weight:400;color:#222;transform:scaleX(0.9252);">Clarity</span>
<span class="t" style="left:130.00px;top:14.42px;font-size:8.40px;line-height:11.76px;font-weight:400;color:#444;transform:scaleX(0.9253);">ClarityMobileTest</span>
<span class="t" style="left:419.40px;top:19.16px;font-size:8.20px;line-height:11.48px;font-weight:700;color:#2b2b2b;transform:scaleX(0.8839);">Dashboard</span>
<span class="t" style="left:474.70px;top:19.16px;font-size:8.20px;line-height:11.48px;font-weight:400;color:#444;transform:scaleX(0.9150);">Recordings</span>
<span class="t" style="left:531.00px;top:19.16px;font-size:8.20px;line-height:11.48px;font-weight:400;color:#444;transform:scaleX(0.9216);">Heatmaps</span>
<span class="t" style="left:583.00px;top:19.16px;font-size:8.20px;line-height:11.48px;font-weight:400;color:#444;transform:scaleX(0.9326);">Settings</span>
<span class="t" style="left:23.40px;top:45.96px;font-size:8.20px;line-height:11.48px;font-weight:700;color:#ffffff;transform:scaleX(0.8463);">Filters</span>
<span class="t" style="left:68.80px;top:45.96px;font-size:8.20px;line-height:11.48px;font-weight:700;color:#3b4876;transform:scaleX(0.8738);">Segments</span>
<span class="t" style="left:134.80px;top:45.96px;font-size:8.20px;line-height:11.48px;font-weight:400;color:#6077b5;transform:scaleX(0.8884);">Last 3 days</span>
<span class="t" style="left:223.40px;top:45.96px;font-size:8.20px;line-height:11.48px;font-weight:700;color:#333;transform:scaleX(0.8743);">Save as segment</span>
</div></body></html>
